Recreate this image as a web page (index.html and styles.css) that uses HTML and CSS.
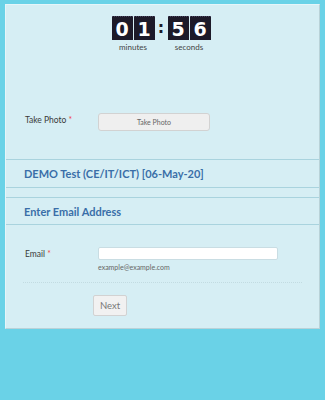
FILE: index.html
```html
<!DOCTYPE html>
<html>
<head>
<meta charset="utf-8">
<link rel="stylesheet" href="styles.css">
</head>
<body>
<div class="card">
  <section class="sec sec-first">
    <div class="timer">
      <div class="tgroup">
        <div class="digits"><span class="digit">0</span><span class="digit">1</span></div>
        <div class="tlabel">minutes</div>
      </div>
      <div class="colon">:</div>
      <div class="tgroup">
        <div class="digits"><span class="digit">5</span><span class="digit">6</span></div>
        <div class="tlabel">seconds</div>
      </div>
    </div>
    <div class="row row-photo">
      <div class="label">Take Photo <span class="req">*</span></div>
      <button class="photo-btn">Take Photo</button>
    </div>
  </section>
  <section class="sec sec-head">
    <h2 class="heading">DEMO Test (CE/IT/ICT) [06-May-20]</h2>
  </section>
  <div class="spacer"></div>
  <section class="sec sec-head sec-top">
    <h2 class="heading">Enter Email Address</h2>
  </section>
  <section class="sec sec-email">
    <div class="row row-email">
      <div class="label">Email <span class="req">*</span></div>
      <div class="field">
        <div class="input"></div>
        <div class="sublabel">example@example.com</div>
      </div>
    </div>
    <div class="dots"></div>
    <div class="actions">
      <button class="next-btn">Next</button>
    </div>
  </section>
</div>
</body>
</html>
```
FILE: styles.css
```css
* { box-sizing: border-box; }
html, body { margin: 0; padding: 0; }
body {
  background: #6ad2e7;
  font-family: Lato, "Open Sans", sans-serif;
  width: 325px;
  height: 400px;
  overflow: hidden;
}
.card {
  margin: 4px 0 0 5px;
  width: 315px;
  background: #d6eef4;
  border-left: 1px solid #e6f5f9;
  border-top: 1px solid #e6f5f9;
  border-right: 1px solid #b9d2d8;
  border-bottom: 1px solid #b9d2d8;
  padding-bottom: 12px;
}
.sec-first {
  padding-top: 11px;
  height: 155px;
  border-bottom: 1px solid #a9d3de;
}
.timer {
  display: flex;
  justify-content: center;
  align-items: flex-start;
  padding-right: 3px;
}
.tgroup {
  display: flex;
  flex-direction: column;
  align-items: center;
}
.digits {
  display: flex;
  gap: 1px;
}
.digit {
  width: 21px;
  height: 24px;
  background: #1d1a29;
  color: #fff;
  font-family: "DejaVu Sans", sans-serif;
  font-weight: bold;
  font-size: 19px;
  line-height: 24px;
  text-align: center;
  border-top: 1px dotted #4a4660;
}
.colon {
  width: 13px;
  text-align: center;
  font-family: "DejaVu Sans", sans-serif;
  font-weight: bold;
  font-size: 16px;
  line-height: 24px;
  color: #1d1a29;
}
.tlabel {
  font-size: 8px;
  color: #444;
  margin-top: 2px;
  line-height: 10px;
}
.row {
  display: flex;
  align-items: flex-start;
  padding-left: 19px;
}
.row-photo {
  margin-top: 61px;
}
.label {
  width: 73px;
  font-size: 8.5px;
  color: #3a3a3a;
  padding-top: 2px;
  line-height: 11px;
}
.req { color: #f0474a; }
.photo-btn {
  width: 112px;
  height: 18px;
  margin: 0;
  padding: 0;
  background: #efefef;
  border: 1px solid #d2d2d2;
  border-radius: 3px;
  font-family: Lato, "Open Sans", sans-serif;
  font-size: 7px;
  color: #666;
}
.sec-head {
  height: 28px;
  border-bottom: 1px solid #a9d3de;
  display: flex;
  align-items: center;
  padding-left: 18px;
}
.sec-top {
  border-top: 1px solid #a9d3de;
  height: 28px;
}
.heading {
  margin: 0;
  font-size: 11px;
  font-weight: bold;
  color: #3a6ea8;
}
.spacer { height: 9px; }
.sec-email {
  padding-top: 22px;
}
.field {
  display: flex;
  flex-direction: column;
}
.input {
  width: 180px;
  height: 13px;
  background: #fff;
  border: 1px solid #c9dde3;
  border-radius: 2px;
}
.sublabel {
  margin-top: 3px;
  font-size: 7px;
  color: #666;
  line-height: 9px;
}
.dots {
  margin: 10px 17px 0 17px;
  border-top: 1px dotted #c2dbe1;
}
.actions {
  padding-left: 87px;
  margin-top: 10px;
}
.next-btn {
  width: 34px;
  height: 21px;
  margin: 0;
  padding: 0;
  background: #f1f1f1;
  border: 1px solid #d2d2d2;
  border-radius: 2px;
  font-family: Lato, "Open Sans", sans-serif;
  font-size: 9.5px;
  color: #777;
}
```
